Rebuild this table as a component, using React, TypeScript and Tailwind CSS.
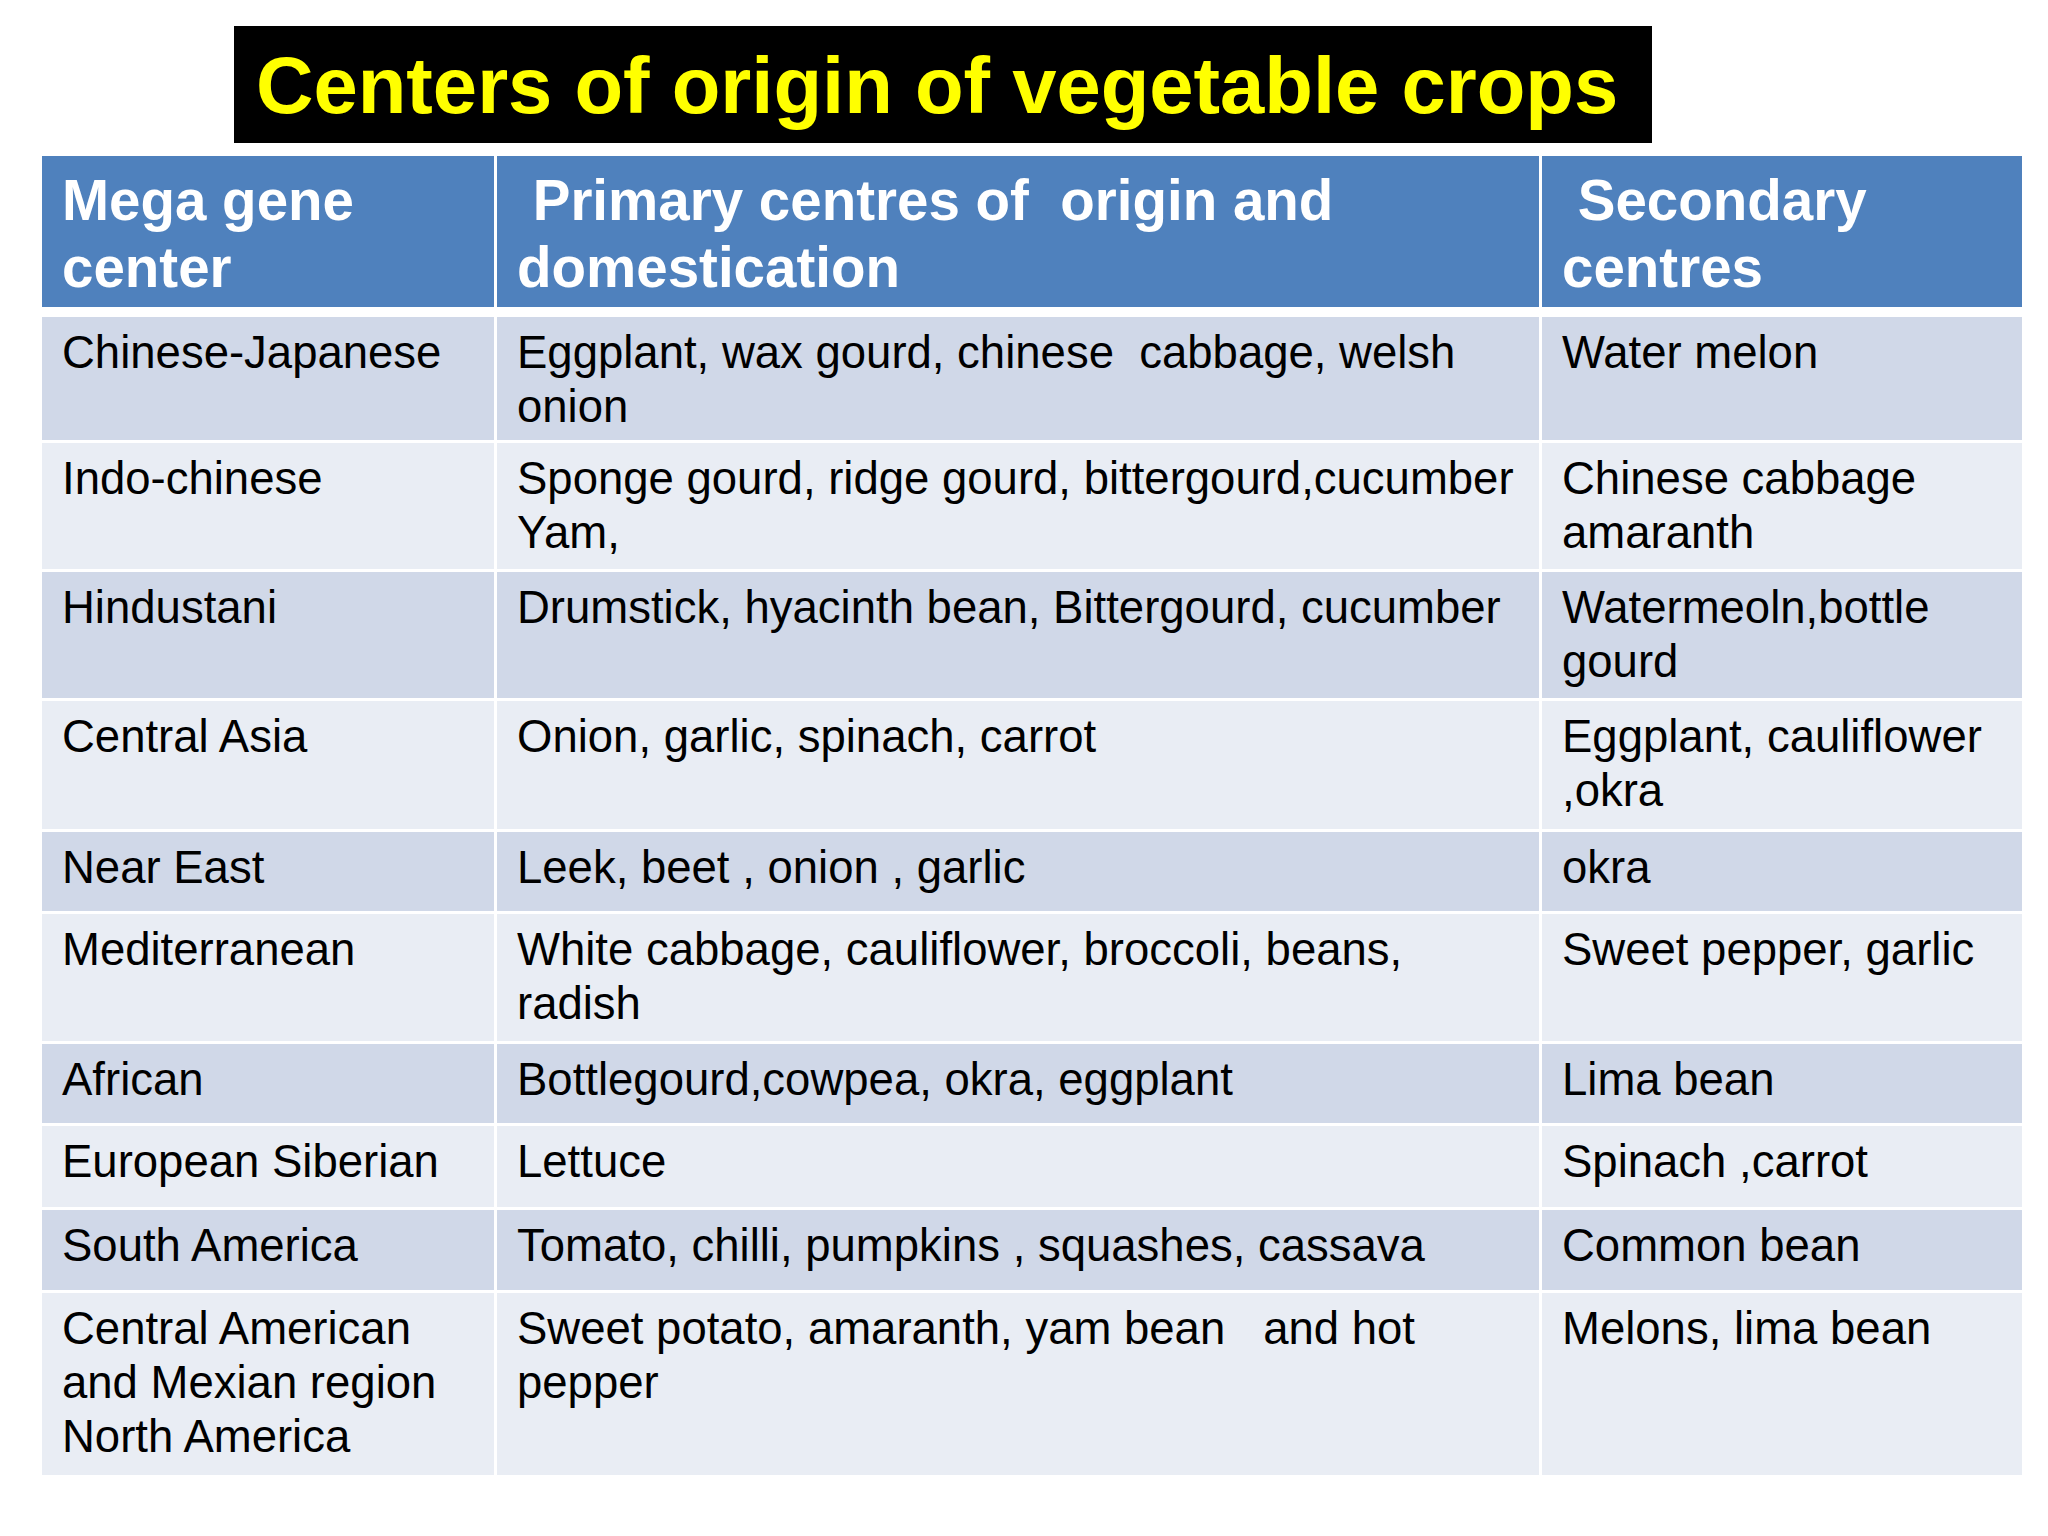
const ROWS = [
  {
    h: "h-[123px]",
    bg: "bg-[#d0d8e8]",
    cells: [["Chinese-Japanese"], ["Eggplant, wax gourd, chinese  cabbage, welsh", "onion"], ["Water melon"]],
  },
  {
    h: "h-[126px]",
    bg: "bg-[#e9edf4]",
    cells: [["Indo-chinese"], ["Sponge gourd, ridge gourd, bittergourd,cucumber", "Yam,"], ["Chinese cabbage", "amaranth"]],
  },
  {
    h: "h-[126px]",
    bg: "bg-[#d0d8e8]",
    cells: [["Hindustani"], ["Drumstick, hyacinth bean, Bittergourd, cucumber"], ["Watermeoln,bottle", "gourd"]],
  },
  {
    h: "h-[128px]",
    bg: "bg-[#e9edf4]",
    cells: [["Central Asia"], ["Onion, garlic, spinach, carrot"], ["Eggplant, cauliflower", ",okra"]],
  },
  {
    h: "h-[79px]",
    bg: "bg-[#d0d8e8]",
    cells: [["Near East"], ["Leek, beet , onion , garlic"], ["okra"]],
  },
  {
    h: "h-[127px]",
    bg: "bg-[#e9edf4]",
    cells: [["Mediterranean"], ["White cabbage, cauliflower, broccoli, beans,", "radish"], ["Sweet pepper, garlic"]],
  },
  {
    h: "h-[79px]",
    bg: "bg-[#d0d8e8]",
    cells: [["African"], ["Bottlegourd,cowpea, okra, eggplant"], ["Lima bean"]],
  },
  {
    h: "h-[81px]",
    bg: "bg-[#e9edf4]",
    cells: [["European Siberian"], ["Lettuce"], ["Spinach ,carrot"]],
  },
  {
    h: "h-[80px]",
    bg: "bg-[#d0d8e8]",
    cells: [["South America"], ["Tomato, chilli, pumpkins , squashes, cassava"], ["Common bean"]],
  },
  {
    h: "h-[182px]",
    bg: "bg-[#e9edf4]",
    cells: [
      ["Central American", "and Mexian region", "North America"],
      ["Sweet potato, amaranth, yam bean   and hot", "pepper"],
      ["Melons, lima bean"],
    ],
  },
];

const HEADERS = [
  ["Mega gene", "center"],
  [" Primary centres of  origin and", "domestication"],
  [" Secondary", "centres"],
];

const COLS = "grid grid-cols-[452px_1042px_480px] gap-x-[3px]";

export default function App() {
  return (
    <div className="min-h-[1536px] w-[2048px] bg-white font-['Liberation_Sans',Arial,sans-serif]">
      <div className="pl-[234px] pt-[26px]">
        <div className="h-[117px] w-[1418px] bg-black pl-[22px] pt-[20px]">
          <h1 className="whitespace-nowrap text-[79.6px] font-bold leading-[80px] text-[#ffff00]">
            Centers of origin of vegetable crops
          </h1>
        </div>
      </div>

      <div className="ml-[42px] mt-[13px] flex w-[1980px] flex-col gap-y-[3px]">
        <div className={`${COLS} mb-[7px]`}>
          {HEADERS.map((lines, i) => (
            <div key={i} className="h-[151px] bg-[#4f81bd] pl-[20px] pt-[11px]">
              {lines.map((line, j) => (
                <div key={j} className="whitespace-pre text-[56.5px] font-bold leading-[67px] text-white">
                  {line}
                </div>
              ))}
            </div>
          ))}
        </div>

        {ROWS.map((row, r) => (
          <div key={r} className={COLS}>
            {row.cells.map((lines, c) => (
              <div key={c} className={`${row.h} ${row.bg} pl-[20px] pt-[9px]`}>
                {lines.map((line, j) => (
                  <div key={j} className="whitespace-pre text-[45.5px] leading-[54px] text-black">
                    {line}
                  </div>
                ))}
              </div>
            ))}
          </div>
        ))}
      </div>
    </div>
  );
}
